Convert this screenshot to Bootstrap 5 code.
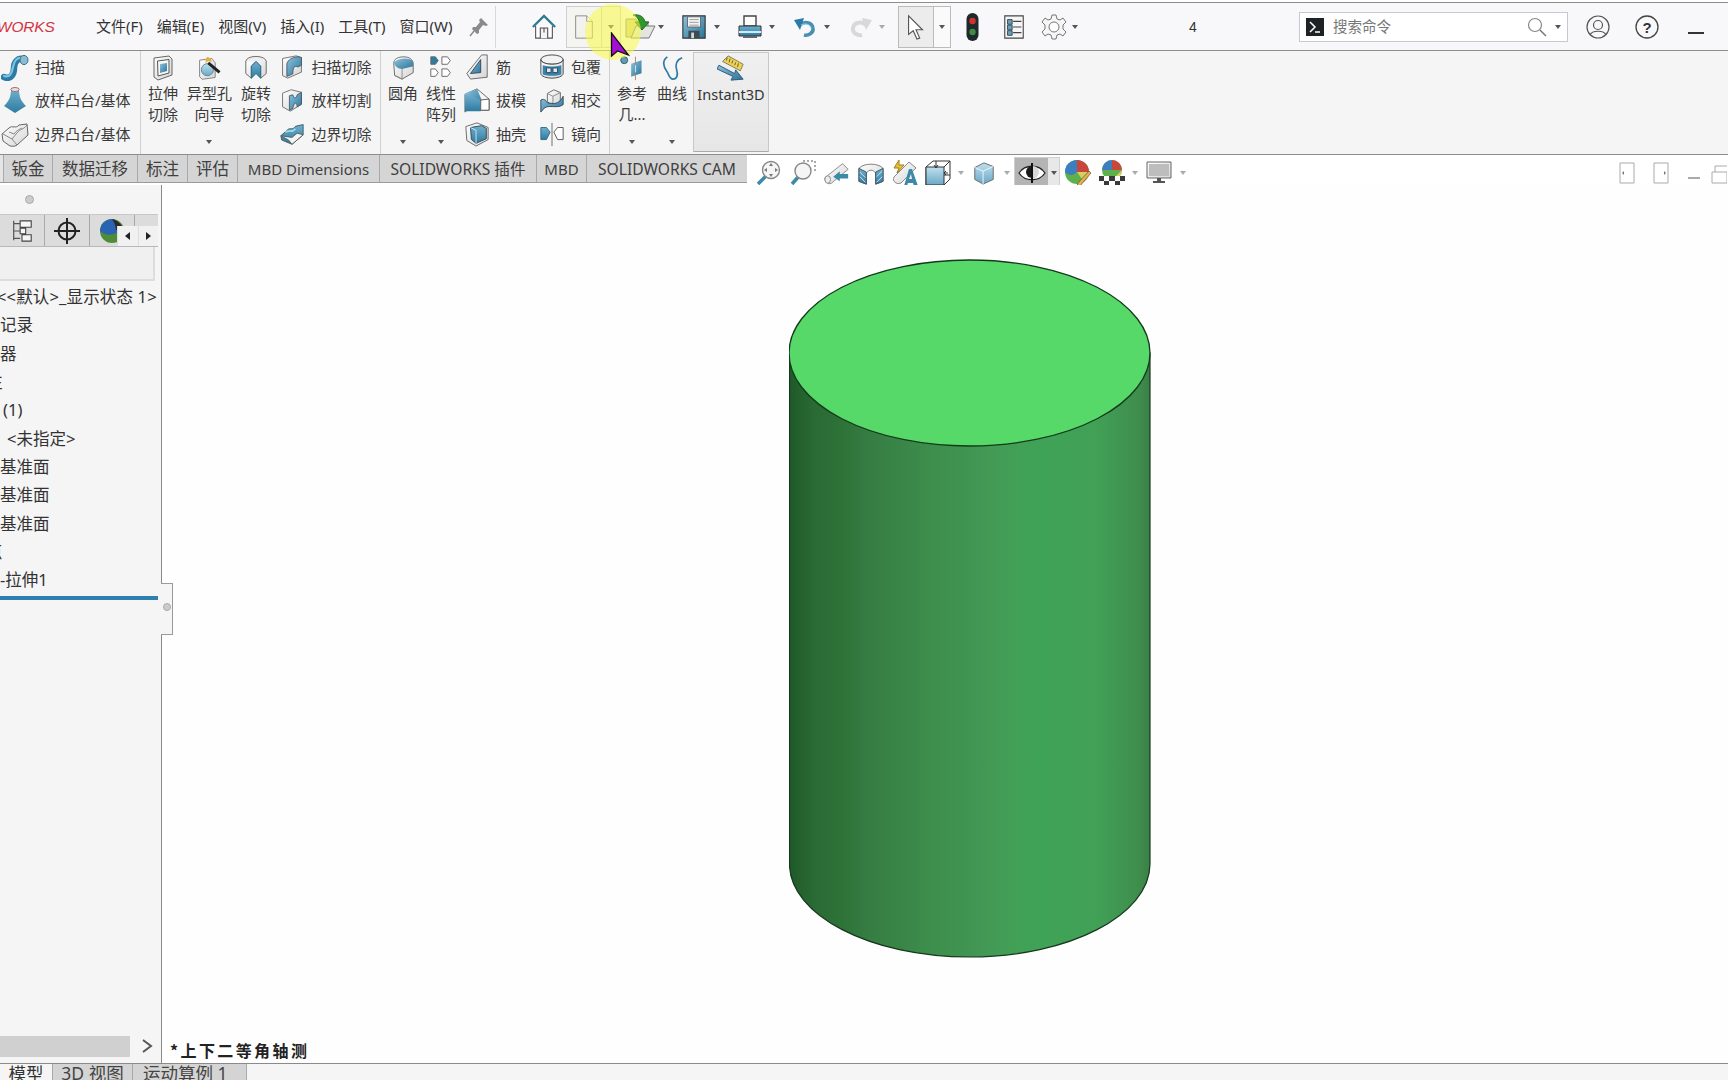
<!DOCTYPE html>
<html lang="zh-CN">
<head>
<meta charset="utf-8">
<title>SOLIDWORKS</title>
<link href="https://cdn.jsdelivr.net/npm/bootstrap@5.3.0/dist/css/bootstrap.min.css" rel="stylesheet">
<style>
html,body{margin:0;height:100%;overflow:hidden;background:#fff}
body{font-family:"Noto Sans","Noto Sans CJK SC",sans-serif;color:#3a3a3a;font-size:15px}
.defs-holder{display:block;width:0;height:0}
.app-root{width:1728px;height:1080px;overflow:hidden;position:relative}
svg.ic{display:block;flex:none}
.s20{width:20px;height:20px}.s22{width:22px;height:22px}.s24{width:24px;height:24px}.s26{width:26px;height:26px}.s28{width:28px;height:28px}.s30{width:30px;height:30px}.s32{width:32px;height:30px}
.caretx{display:block;flex:none;width:0;height:0;border-left:3.5px solid transparent;border-right:3.5px solid transparent;border-top:4px solid #555}
.caretx.faint{border-top-color:#aaa}
/* top bar */
.topbar{padding-top:2px;padding-bottom:1px;border-top:1px solid #8d8d8d;margin-top:2px;border-bottom:1px solid #8d8d8d;background:#f8f8fa;display:grid;grid-template-columns:96px 373px 26px 36px 35px 58px 34px 23px 33px 23px 32px 24px 31px 25px 30px 19px 66px 38px 39px 31px 114px 113px 287px 49px 53px 40px;align-items:center;box-sizing:content-box;height:44px}
.brand{font-family:"Liberation Sans",sans-serif;font-style:italic;font-size:15.5px;color:#d3353f;letter-spacing:-.2px;margin-left:-3px}
.menus{display:flex;gap:14px;font-size:15px;line-height:20px;color:#333;white-space:nowrap;margin-top:-2px}
.vsep{width:1px;height:42px;background:#d8d8d8}
.ddbox{width:55px;height:42px;display:flex;align-items:center;border:1px solid #cfcfcf;background:#f4f4f0}
.ddbox .mainpart{width:35px;height:100%;display:flex;align-items:center;justify-content:center;border-right:1px solid #cfcfcf}
.ddbox .tail{flex:1;display:flex;justify-content:center}
.ddbox.sel{width:53px;border-color:#bbb;background:#fafafa}
.ddbox.sel .mainpart{background:#ececec;border-right-color:#bbb}
.num4{font-family:"Liberation Sans",sans-serif;font-size:14px;padding-left:3px;color:#333}
.cmdsearch{width:269px;height:30px;background:#fff;border:1px solid #c8c8d2;display:flex;align-items:center;padding:0 6px;font-size:14.5px;color:#777}
.cmdsearch .qt{margin-left:9px;flex:1}
.minbar{width:16px;height:2px;background:#333;margin-top:11px}
/* ribbon */
.ribbon{height:104px;background:#f5f5f5;border-bottom:1px solid #8d8d8d;display:flex;box-sizing:border-box}
.rgroup{height:100%;border-right:1px solid #d0d0d0;display:grid}
.g1{width:141px;grid-template-columns:1fr}
.g2{width:240px;padding-left:4px;grid-template-columns:36px 46px 36px 1fr;column-gap:5.5px}
.g3{width:229px;padding-left:5px;grid-template-columns:34px 34px 73px auto;column-gap:4px}
.g4{width:83px;padding-left:6px;grid-template-columns:32px 32px;column-gap:8px}
.tallbtn{display:flex;flex-direction:column;align-items:center;height:103px;padding-top:4px;font-size:15px;line-height:21px;text-align:center;position:relative;white-space:nowrap}
.tallbtn .ic{margin-bottom:2px}
.tallbtn .caretx{position:absolute;bottom:10px;left:50%;margin-left:-3.5px}
.rlist{display:flex;flex-direction:column;font-size:15px;white-space:nowrap;margin-top:-1px}
.rrow{height:33.6px;display:flex;align-items:center}
.g1 .rrow{padding-left:1px;gap:6px}
.g2 .rrow{gap:8px}
.g3 .rrow.a{gap:6px;padding-left:2px}
.g3 .rrow.b{gap:6px}
.inst{width:76px;height:100px;margin-top:1px;background:linear-gradient(#f0f0f0,#e6e6e6);border:1px solid #c8c8c8;border-bottom-color:#aaa;display:flex;flex-direction:column;align-items:center;padding-top:1px;font-size:14.5px;line-height:21px;color:#333}
.inst .ic{margin-bottom:2px}
/* tabs */
.tabrow{height:30px;display:flex;background:#fff}
.tabs-x{display:grid;grid-template-columns:3px 49px 85px 50px 50px 142px 157px 50px 161px;height:28px;border-bottom:1px solid #9a9a9a;background:#d5d5d5;font-size:16.5px;color:#3f3f3f}
.tabs-x>div{display:flex;align-items:center;justify-content:center;border-left:1px solid #a9a9a9;white-space:nowrap;line-height:26px}
.tabs-x>div:first-child{border-left:0;background:#e4e4e4}
.tabs-x .lt{font-size:15px}
.tabs-x .lw{font-size:15.6px}
.viewtools{display:grid;grid-template-columns:5px 34px 34px 33px 35px 33px 34px 12px 34px 12px 48px 34px 34px 12px 36px 12px 1fr 34px 34px 32px 18px;align-items:center;height:32px;flex:1;margin-top:2px}
.viewtools>*{justify-self:center}
.eyebox{width:46px;height:32px;display:flex;border:1px solid #cfcfcf;background:#e8e8e8;align-items:center}
.eyebox .on{width:33px;height:100%;background:#b4b4b4;display:flex;align-items:center;justify-content:center}
.eyebox .tail{flex:1;display:flex;justify-content:center}
/* work */
.workarea{display:flex;height:878px}
.sidepanel{width:162px;flex:none;background:#f5f5f5;border-right:1px solid #8a8a8a;position:relative;display:flex;flex-direction:column}
.dotrow{height:29px;display:flex;align-items:center;padding-left:25px}
.ball{width:9px;height:9px;border-radius:50%;background:#ccc;border:1px solid #aaa}
.paneltabs{height:33px;display:flex;width:158px;background:#dcdcdc;border-top:1px solid #c8c8c8;border-bottom:1px solid #b8b8b8;position:relative;overflow:hidden}
.paneltabs .pt{width:45px;flex:none;display:flex;align-items:center;justify-content:center;border-right:1px solid #aaa}
.ptarrows{position:absolute;right:0;bottom:0;width:41px;height:20px;display:flex;background:#f1f1f1}
.ptarrows span{flex:1;display:flex;align-items:center;justify-content:center;border-left:1px solid #ddd}
.tri-l{width:0;height:0;border-top:4px solid transparent;border-bottom:4px solid transparent;border-right:5px solid #222}
.tri-r{width:0;height:0;border-top:4px solid transparent;border-bottom:4px solid transparent;border-left:5px solid #222}
.filterbox{height:34px;width:155px;background:#f0f0f0;border-right:2px solid #ddd;border-bottom:2px solid #ddd}
.treelist{padding-top:2px;font-size:16.5px;line-height:28.33px;white-space:nowrap;overflow:hidden;width:158px;color:#333}
.treelist>div{height:28.33px}
.neg3{margin-left:-3px;letter-spacing:.15px}.neg13{margin-left:-14px}.pl2x{padding-left:7px}.pl1x{padding-left:3px}
.bluebar{width:158px;height:4px;background:#2f7fb3;margin-top:1px}
.notch{position:absolute;left:161px;top:398px;width:12px;height:52px;background:#f5f5f5;border:1px solid #9a9a9a;border-left:0;z-index:2}
.notch i{position:absolute;left:2px;top:19px;width:8px;height:8px;border-radius:50%;background:#ccc;border:1px solid #aaa}
.hscroll{margin-top:auto;height:26px;display:flex;align-items:center;margin-bottom:4px}
.hscroll .th{width:130px;height:21px;background:#d0d0d0}
.hscroll .chev{margin-left:11px;width:12px;height:14px}
.canvasv{flex:1;position:relative;background:#fefefe}
.cylsvg{position:absolute;left:627px;top:65px;width:380px;height:720px}
.viewlabel{position:absolute;left:8px;bottom:3px;font-size:16px;font-weight:700;letter-spacing:2.4px;line-height:20px;color:#222;font-family:"Noto Sans CJK SC",sans-serif;white-space:nowrap}
.bottombar{height:18px;border-top:1px solid #8a8a8a;background:#f5f5f5;display:flex;overflow:hidden;font-size:17.5px;line-height:19px;color:#444}
.bottombar>div{display:flex;justify-content:center;white-space:nowrap;background:#d4d4d4;border-right:1px solid #a9a9a9}
.bottombar .b1{width:53px;background:#f5f5f5;color:#333}
.bottombar .b2{width:80px}.bottombar .b3{width:114px;justify-content:flex-start;padding-left:10px}
/* cursor */
.halo{position:absolute;left:585px;top:4px;width:56px;height:56px;border-radius:50%;background:radial-gradient(circle,rgba(250,250,70,.55) 78%,rgba(250,250,70,.22) 96%,rgba(250,250,70,0) 100%);pointer-events:none}
.pointer{position:absolute;left:610px;top:32px;width:20px;height:27px}
</style>
</head>
<body>
<svg class="defs-holder" xmlns="http://www.w3.org/2000/svg">
<defs>
<linearGradient id="gb" x1="0" y1="0" x2="1" y2="1"><stop offset="0" stop-color="#8cc3dc"/><stop offset="1" stop-color="#2c7399"/></linearGradient>
<linearGradient id="gv" x1="0" y1="0" x2="0" y2="1"><stop offset="0" stop-color="#6fb0cf"/><stop offset="1" stop-color="#2f7ba0"/></linearGradient>
<linearGradient id="gw" x1="0" y1="0" x2="1" y2="1"><stop offset="0" stop-color="#fff"/><stop offset="1" stop-color="#d5d5d5"/></linearGradient>
<linearGradient id="gs" x1="0" y1="0" x2="0" y2="1"><stop offset="0" stop-color="#bfe0ee"/><stop offset="1" stop-color="#6aa8c7"/></linearGradient>
<symbol id="i-sweep" viewBox="0 0 28 28"><path d="M3 24C10 27 13 21 13 15S17 5 21 6" fill="none" stroke="#2c7ba6" stroke-width="6.5" stroke-linecap="round"/><path d="M3 23C9 25 11 20 12 14S16 4 21 5" fill="none" stroke="#7fc3df" stroke-width="2.2" stroke-linecap="round"/><ellipse cx="23" cy="7" rx="4" ry="4.6" fill="#8dbcd2" stroke="#3f6f88"/></symbol>
<symbol id="i-loft" viewBox="0 0 28 28"><path d="M10 3C10 11 8 15 3 20L14 27 25 20C20 15 18 11 18 3Z" fill="url(#gv)"/><ellipse cx="14" cy="3.5" rx="4.2" ry="2" fill="#d6e6ee" stroke="#b66"/></symbol>
<symbol id="i-bound" viewBox="0 0 28 28"><path d="M1 14 8 8C11 5 15 9 18 5L26 4 27 15 16 25C13 27 11 26 9 26L2 21Z" fill="url(#gw)" stroke="#666"/><path d="M2 14 11 19 16 25M11 19 16 13C19 9 22 10 26 5M8 12 13 14C15 11 17 10 21 8" fill="none" stroke="#888"/></symbol>
<symbol id="i-ext" viewBox="0 0 24 26"><path d="M3 3 18 1 21 4V20L7 25 3 22Z" fill="url(#gw)" stroke="#666"/><path d="M6.500 6 18 4.500V18L7 21Z" fill="#f7f7f7" stroke="#555"/><path d="M9 9 16 8V16L9 18Z" fill="url(#gb)"/></symbol>
<symbol id="i-hole" viewBox="0 0 30 28"><path d="M3 5 17 3 21 8V25L6 27 3 24Z" fill="url(#gw)" stroke="#777"/><circle cx="12" cy="16" r="7" fill="url(#gs)" stroke="#5a7f92"/><path d="M13 8 26 19" stroke="#222" stroke-width="3.400"/><path d="M12 1 16 3 17 7 13 6 10 8 10 4Z" fill="#e0b040"/></symbol>
<symbol id="i-rev" viewBox="0 0 26 28"><ellipse cx="13" cy="7" rx="11" ry="5.500" fill="#eee" stroke="#666"/><path d="M2 7V20L8 25V12L13 7 18 12V25L24 20V7" fill="url(#gw)" stroke="#666"/><path d="M8 12 13 7 18 12V25L13 20 8 25Z" fill="url(#gv)" stroke="#2f6b8a"/></symbol>
<symbol id="i-swcut" viewBox="0 0 26 28"><path d="M2 4 18 1 24 3V20L8 27 2 24Z" fill="url(#gw)" stroke="#666"/><path d="M7 25V10C9 5 13 3 20 2L24 3C24 6 24 9 24 12L20 14C16 12 14 14 14 22Z" fill="url(#gb)" stroke="#456"/></symbol>
<symbol id="i-lfcut" viewBox="0 0 26 28"><path d="M2 6 12 2 24 5V19L11 27 2 22Z" fill="url(#gw)" stroke="#666"/><path d="M10 26V9L14 8C15 12 18 13 19 8L24 5V19L19 22C19 16 15 16 14 24Z" fill="url(#gb)" stroke="#456"/></symbol>
<symbol id="i-bdcut" viewBox="0 0 28 28"><path d="M1 16 9 9C12 6 15 10 18 5L27 3V15L14 26 2 21Z" fill="url(#gv)" stroke="#355"/><path d="M1 16 10 21 14 26 27 15 20 13 14 18Z" fill="#f4f4f4" stroke="#555"/><path d="M6 12C10 9 14 13 18 8" fill="none" stroke="#a4d4e8" stroke-width="2"/></symbol>
<symbol id="i-fil" viewBox="0 0 26 28"><path d="M3 9C3 4 8 2 14 2 20 2 24 5 24 10V19L12 26 4 22Z" fill="url(#gw)" stroke="#666"/><path d="M3 8C8 3 20 2 24 7V12L12 15C8 15 4 12 3 8Z" fill="url(#gb)"/><path d="M4 22 12 26 12 15" fill="none" stroke="#888"/></symbol>
<symbol id="i-pat" viewBox="0 0 28 28"><g stroke="#666" stroke-linejoin="round"><path d="M3 2H8L11 6 8 10H3Z" fill="#2f7ba0"/><path d="M15 2H21L24 6 21 10H15Z" fill="#fff"/><path d="M3 15H8L11 19 8 23H3Z" fill="#fff"/><path d="M15 15H21L24 19 21 23H15Z" fill="#fff"/></g></symbol>
<symbol id="i-rib" viewBox="0 0 26 28"><path d="M2 21 6 27 24 25 24 1 18 1Z" fill="url(#gw)" stroke="#666"/><path d="M6 21 17 6V20Z" fill="url(#gb)" stroke="#345"/></symbol>
<symbol id="i-draft" viewBox="0 0 28 28"><path d="M1 8 14 2 27 13V25H14V17L1 27Z" fill="#f5f5f5" stroke="#666"/><path d="M1 7 14 2 19 14 1 26Z" fill="url(#gb)"/><path d="M1 26V8L18 14V26Z" fill="url(#gv)"/><path d="M18 14 27 13V25H18Z" fill="#fff" stroke="#555"/></symbol>
<symbol id="i-shell" viewBox="0 0 28 28"><path d="M2 6 14 2 26 7V20L13 27 3 21Z" fill="url(#gw)" stroke="#666"/><path d="M7 7 19 5 24 8V19L13 24 8 20Z" fill="url(#gv)" stroke="#345"/><path d="M7 7 13 10V24" fill="none" stroke="#cfe4ee"/></symbol>
<symbol id="i-wrap" viewBox="0 0 28 28"><ellipse cx="14" cy="6" rx="12" ry="5" fill="#f2f2f2" stroke="#444"/><path d="M2 6V21C2 24 8 26 14 26S26 24 26 21V6C26 9 20 11 14 11S2 9 2 6Z" fill="url(#gw)" stroke="#444"/><path d="M4 12C10 14 18 14 24 12V22C18 24 10 24 4 22Z" fill="#3682a8"/><path d="M8 15H13V20H8ZM15 15H20V20H15Z" fill="#d8e8f0" stroke="#345"/></symbol>
<symbol id="i-inter" viewBox="0 0 28 28"><path d="M9 7 16 3 23 6V17L15 20 9 16Z" fill="url(#gw)" stroke="#666"/><path d="M9 7 15 10 23 6M15 10V20" fill="none" stroke="#888"/><path d="M2 14C6 12 8 15 9 17L16 18C20 17 23 16 26 10V19C22 22 16 21 11 21 7 21 5 23 2 27Z" fill="url(#gb)" stroke="#345"/></symbol>
<symbol id="i-mirr" viewBox="0 0 28 28"><path d="M2 7H8L12 12 8 20H2Z" fill="url(#gv)" stroke="#2f6b8a"/><path d="M26 7H20L16 12 20 20H26Z" fill="#fff" stroke="#555"/><path d="M14 2V27" stroke="#666"/></symbol>
<symbol id="i-ref" viewBox="0 0 30 28"><path d="M14 9 26 5V20L14 24Z" fill="url(#gb)"/><path d="M19 1V9M19 21V28" stroke="#b07a50"/><path d="M19 11V19" stroke="#ddeef6"/><circle cx="6" cy="5" r="4" fill="#5d9dbb" stroke="#355"/></symbol>
<symbol id="i-curve" viewBox="0 0 28 28"><path d="M9 2C3 6 5 13 8 17 11 21 11 26 15 26 19 26 21 22 19 16 17 11 19 5 25 3" fill="none" stroke="#2d7ca3" stroke-width="1.800"/></symbol>
<symbol id="i-i3d" viewBox="0 0 30 28"><path d="M6 7 12 1 28 10 25 17Z" fill="#efd34a" stroke="#776"/><path d="M11 3 10 6M14 4 13 8M17 6 16 9M20 8 19 11M23 9 22 13" stroke="#555"/><path d="M2 11 19 20 20 16 28 26 15 27 17 23 0 15Z" fill="url(#gb)" stroke="#357"/></symbol>
<symbol id="i-home" viewBox="0 0 26 28"><path d="M1 14 13 2 25 14" fill="none" stroke="#2f7a90" stroke-width="2.500"/><path d="M4 13V26H22V13" fill="#fff" stroke="#555" stroke-width="1.200"/><path d="M9 26V15H17V26M13 15V20" fill="#f4f4f4" stroke="#444" stroke-width="1.100"/></symbol>
<symbol id="i-doc" viewBox="0 0 24 28"><path d="M3 2H15L21 8V26H3Z" fill="#f2f2ef" stroke="#888"/><path d="M15 2V8H21" fill="#fff" stroke="#888"/></symbol>
<symbol id="i-open" viewBox="0 0 32 28"><path d="M2 6H12L14 9H24V24H2Z" fill="#d9d68a" stroke="#888"/><path d="M7 25 12 13H31L25 25Z" fill="#e4e4e0" stroke="#777"/><path d="M9 2C16 1 20 4 21 9H25L18 17 11 9H15C15 6 13 4 9 2Z" fill="#2f9a2c" stroke="#1f6a1c"/></symbol>
<symbol id="i-save" viewBox="0 0 26 28"><path d="M1 2H25V26H1Z" fill="url(#gb)" stroke="#333" stroke-width="1.200"/><path d="M6 3H20V14H6Z" fill="#f3f3f3" stroke="#666"/><path d="M8 6H18M8 9H18M8 12H18" stroke="#999"/><path d="M7 18H19V26H7Z" fill="#3c4a52"/><path d="M10 20H13V26H10Z" fill="#d0d8dc"/></symbol>
<symbol id="i-print" viewBox="0 0 26 26"><path d="M7 2H19V12H7Z" fill="#fff" stroke="#444" stroke-width="1.400"/><path d="M2 12H24V22H2Z" fill="url(#gv)" stroke="#333"/><path d="M2 18H24" stroke="#cfeaf6" stroke-width="2"/><path d="M6 22H20V24H6Z" fill="#666"/></symbol>
<symbol id="i-undo" viewBox="0 0 24 24"><path d="M7 10C11 6 19 7 20 13 21 18 15 21 11 20" fill="none" stroke="#4a8fb3" stroke-width="3.500"/><path d="M1 5 11 3 7 15Z" fill="#2c7ba6"/><path d="M8 10C12 8 17 9 18 13" fill="none" stroke="#9ccfe4"/></symbol>
<symbol id="i-redo" viewBox="0 0 24 24"><g fill="#d8d8d8"><path d="M17 10C13 6 5 7 4 13 3 18 9 21 13 20" fill="none" stroke="#d8d8d8" stroke-width="4"/><path d="M23 5 13 3 17 15Z"/></g></symbol>
<symbol id="i-cur" viewBox="0 0 22 28"><path d="M3 2V22L8 18 12 27 15 26 11 17 18 17Z" fill="#fff" stroke="#555" stroke-width="1.200"/></symbol>
<symbol id="i-light" viewBox="0 0 16 30"><rect x="2" y="1" width="12" height="28" rx="6" fill="#1e2a2a"/><circle cx="8" cy="9" r="3.200" fill="#d0322f"/><circle cx="8" cy="20" r="3.200" fill="#3d8c45"/></symbol>
<symbol id="i-list" viewBox="0 0 24 26"><path d="M2 1H22V25H2Z" fill="#f6f6f6" stroke="#444" stroke-width="1.200"/><path d="M5 5H10V10H5ZM5 11H10V16H5ZM5 17H10V22H5Z" fill="#6aa2bd" stroke="#345"/><path d="M11 7H20M11 13H20M11 19H20" stroke="#444" stroke-width="1.300"/></symbol>
<symbol id="i-gear" viewBox="0 0 26 26"><path d="M11 1H15L16 5 19 6 22 4 25 8 22 11V15L25 18 22 22 19 20 16 21 15 25H11L10 21 7 20 4 22 1 18 4 15V11L1 8 4 4 7 6 10 5Z" fill="#f6f6f6" stroke="#777"/><circle cx="13" cy="13" r="5" fill="#fff" stroke="#777"/></symbol>
<symbol id="i-term" viewBox="0 0 18 18"><rect width="18" height="18" fill="#1f2225"/><path d="M4 4 9 9 4 14M9 14H14" fill="none" stroke="#fff" stroke-width="1.500"/></symbol>
<symbol id="i-mag" viewBox="0 0 20 20"><circle cx="8" cy="8" r="6.500" fill="none" stroke="#888" stroke-width="1.200"/><path d="M13 13 19 19" stroke="#777" stroke-width="1.500"/></symbol>
<symbol id="i-user" viewBox="0 0 24 24"><circle cx="12" cy="12" r="11" fill="none" stroke="#555" stroke-width="1.200"/><circle cx="12" cy="10" r="4.500" fill="none" stroke="#555" stroke-width="1.200"/><path d="M4 20C6 15 18 15 20 20" fill="none" stroke="#555" stroke-width="1.200"/></symbol>
<symbol id="v-zfit" viewBox="0 0 26 26"><path d="M10 16 2 24" stroke="#3d8aa8" stroke-width="3.500"/><circle cx="15" cy="10" r="8.500" fill="#f5f5f5" stroke="#888" stroke-width="1.400"/><path d="M15 3 13 6H17ZM15 17 13 14H17ZM8 10 11 8V12ZM22 10 19 8V12Z" fill="#777"/></symbol>
<symbol id="v-zarea" viewBox="0 0 26 26"><path d="M9 16 2 24" stroke="#3d8aa8" stroke-width="3.500"/><circle cx="13" cy="11" r="8" fill="#f5f5f5" stroke="#888" stroke-width="1.400"/><path d="M13 1H25V13" fill="none" stroke="#555" stroke-dasharray="2 2"/></symbol>
<symbol id="v-prev" viewBox="0 0 28 26"><path d="M1 18 20 3 26 9 8 24C4 26 0 22 1 18Z" fill="url(#gw)" stroke="#888"/><path d="M26 14H17V11L10 17 17 22V19H26Z" fill="#3d8aa8"/><ellipse cx="4" cy="20" rx="3" ry="4" fill="#eee" stroke="#888"/></symbol>
<symbol id="v-sect" viewBox="0 0 28 26"><path d="M1 8C6 2 22 2 27 8V22L19 25V13C16 9 12 9 9 13V25L1 22Z" fill="url(#gw)" stroke="#777"/><path d="M1 8 9 12V25L1 22ZM19 12 27 8V22L19 25Z" fill="url(#gv)" stroke="#456"/><path d="M2 12 8 18M2 17 8 23M20 17 26 11M20 23 26 17" stroke="#d8eaf2"/></symbol>
<symbol id="v-dyn" viewBox="0 0 28 28"><path d="M3 18 18 3 25 9 10 24C5 26 1 22 3 18Z" fill="url(#gw)" stroke="#888"/><path d="M8 1 3 9H8L6 14 13 6H8Z" fill="#e8c030" stroke="#a08020"/><path d="M18 10 13 27H16L17 24H22L23 27H27L21 10Z" fill="#3d8aa8"/><path d="M18 20H21L20 15Z" fill="#eee"/></symbol>
<symbol id="v-orient" viewBox="0 0 28 28"><path d="M2 8 9 2H26V20L20 26H2Z" fill="#fff" stroke="#333"/><path d="M2 8H20V26H2Z" fill="url(#gs)" stroke="#333"/><path d="M20 8 26 2M20 16H26" stroke="#333"/><path d="M12 2V8M10 6 12 9 14 6M24 14H20M22 12 20 14 22 16" stroke="#333" fill="none"/></symbol>
<symbol id="v-disp" viewBox="0 0 24 26"><path d="M2 7 12 2 22 6V20L11 25 2 20Z" fill="url(#gs)" stroke="#666"/><path d="M2 7 11 11 22 6M11 11V25" fill="none" stroke="#f0f8fc"/></symbol>
<symbol id="v-eye" viewBox="0 0 28 22"><path d="M1 11C7 2 21 2 27 11 21 20 7 20 1 11Z" fill="#fff" stroke="#222" stroke-width="1.300"/><circle cx="14" cy="10" r="6" fill="#1a1a1a"/><path d="M14 1V21" stroke="#111" stroke-width="2"/><path d="M15 4A6 6 0 0 1 15 16Z" fill="#d8d8d8"/></symbol>
<symbol id="v-ball" viewBox="0 0 28 28"><circle cx="13" cy="13" r="12" fill="#5db04a"/><path d="M13 1A12 12 0 0 0 1 13C5 17 9 17 13 13Z" fill="#3c7fc0"/><path d="M13 1A12 12 0 0 1 25 13L13 13Z" fill="#c8463c"/><path d="M25 13A12 12 0 0 1 20 23L13 13Z" fill="#d6cf60"/><path d="M27 14 16 27 13 27 14 24 25 12Z" fill="#e8b048" stroke="#555" stroke-width=".7"/></symbol>
<symbol id="v-scene" viewBox="0 0 28 28"><circle cx="14" cy="11" r="10" fill="#5db04a"/><path d="M14 1A10 10 0 0 0 4 11L14 11Z" fill="#3c7fc0"/><path d="M14 1A10 10 0 0 1 24 11L14 11Z" fill="#c8463c"/><path d="M24 11A10 10 0 0 1 14 21Z" fill="#d6cf60"/><path d="M1 17H27V27H1Z" fill="#fff"/><path d="M1 17H6V22H1ZM11 17H17V22H11ZM22 17H27V22H22ZM6 22H11V27H6ZM17 22H22V27H17Z" fill="#3a3a3a"/></symbol>
<symbol id="v-mon" viewBox="0 0 26 24"><path d="M1 1H25V17H1Z" fill="url(#gw)" stroke="#666"/><path d="M3 3H23V15H3Z" fill="#bdbdbd"/><path d="M11 17H15V20H19V22H7V20H11Z" fill="#555"/></symbol>
<symbol id="v-pl" viewBox="0 0 16 22"><path d="M1 1H15V21H1Z" fill="#fff" stroke="#aaa"/><path d="M5 9 3 11 5 13Z" fill="#777"/></symbol>
<symbol id="v-pr" viewBox="0 0 16 22"><path d="M1 1H15V21H1Z" fill="#fff" stroke="#aaa"/><path d="M11 9 13 11 11 13Z" fill="#777"/></symbol>
<symbol id="v-res" viewBox="0 0 16 22"><path d="M1 10H16V21H1ZM4 10V4H16" fill="#fff" stroke="#aaa"/></symbol>
<symbol id="p-tree" viewBox="0 0 24 26"><path d="M3 2V23M3 5H10M3 13H10M3 21H10" stroke="#555" stroke-width="1.300" fill="none"/><path d="M10 2H22V9H10ZM10 10H16V16H10ZM12 17H22V24H12Z" fill="#f5f5f5" stroke="#444" stroke-width="1.200"/></symbol>
<symbol id="p-cross" viewBox="0 0 26 26"><circle cx="13" cy="13" r="8.500" fill="none" stroke="#222" stroke-width="2"/><path d="M13 0V26M0 13H26" stroke="#222" stroke-width="2"/></symbol>
<symbol id="p-globe" viewBox="0 0 26 26"><circle cx="13" cy="13" r="12" fill="#4f8c3a"/><path d="M13 1A12 12 0 0 0 1 13C6 18 16 18 22 12 22 6 18 2 13 1Z" fill="#2a63b0"/><path d="M13 1C18 2 23 6 25 12L17 12C17 8 15 4 13 1Z" fill="#2a2a2a"/></symbol>
</defs>
</svg>
<div class="app-root">
  <header class="topbar">
    <div class="brand">WORKS</div>
    <nav class="menus"><span>文件(F)</span><span>编辑(E)</span><span>视图(V)</span><span>插入(I)</span><span>工具(T)</span><span>窗口(W)</span></nav>
    <svg class="ic s20" viewBox="0 0 20 20"><path d="M12 1 19 8 17 9 14 8 10 13 10 16 8 17 3 12 4 10 7 10 11 5 10 3Z" fill="#8a8a8a"/><path d="M5 14 1 19" stroke="#8a8a8a" stroke-width="1.500"/></svg>
    <div class="vsep"></div>
    <svg class="ic s26"><use href="#i-home"/></svg>
    <div class="ddbox"><span class="mainpart"><svg class="ic s26"><use href="#i-doc"/></svg></span><span class="tail"><i class="caretx"></i></span></div>
    <svg class="ic s32"><use href="#i-open"/></svg><i class="caretx"></i>
    <svg class="ic s26"><use href="#i-save"/></svg><i class="caretx"></i>
    <svg class="ic s26"><use href="#i-print"/></svg><i class="caretx"></i>
    <svg class="ic s24"><use href="#i-undo"/></svg><i class="caretx"></i>
    <svg class="ic s24"><use href="#i-redo"/></svg><i class="caretx faint"></i>
    <div class="ddbox sel"><span class="mainpart"><svg class="ic s26"><use href="#i-cur"/></svg></span><span class="tail"><i class="caretx"></i></span></div>
    <svg class="ic" width="17" height="30"><use href="#i-light"/></svg>
    <svg class="ic s24"><use href="#i-list"/></svg>
    <svg class="ic s26"><use href="#i-gear"/></svg><i class="caretx"></i>
    <div class="num4">4</div>
    <div class="cmdsearch"><svg class="ic" width="18" height="18"><use href="#i-term"/></svg><span class="qt">搜索命令</span><svg class="ic s20"><use href="#i-mag"/></svg><i class="caretx ms-2"></i></div>
    <svg class="ic s24"><use href="#i-user"/></svg>
    <div class="d-flex"><svg class="ic s24" viewBox="0 0 24 24"><circle cx="12" cy="12" r="11" fill="none" stroke="#444" stroke-width="1.300"/><text x="12" y="17.500" text-anchor="middle" font-family="Liberation Sans" font-size="15" font-weight="700" fill="#333">?</text></svg></div>
    <div class="minbar"></div>
  </header>

  <section class="ribbon">
    <div class="rgroup g1"><div class="rlist">
      <div class="rrow"><svg class="ic s28"><use href="#i-sweep"/></svg><span>扫描</span></div>
      <div class="rrow"><svg class="ic s28"><use href="#i-loft"/></svg><span>放样凸台/基体</span></div>
      <div class="rrow"><svg class="ic s28"><use href="#i-bound"/></svg><span>边界凸台/基体</span></div>
    </div></div>
    <div class="rgroup g2">
      <div class="tallbtn"><svg class="ic s26"><use href="#i-ext"/></svg>拉伸<br>切除</div>
      <div class="tallbtn"><svg class="ic s26"><use href="#i-hole"/></svg>异型孔<br>向导<i class="caretx"></i></div>
      <div class="tallbtn"><svg class="ic s26"><use href="#i-rev"/></svg>旋转<br>切除</div>
      <div class="rlist">
        <div class="rrow"><svg class="ic s24"><use href="#i-swcut"/></svg><span>扫描切除</span></div>
        <div class="rrow"><svg class="ic s24"><use href="#i-lfcut"/></svg><span>放样切割</span></div>
        <div class="rrow"><svg class="ic s24"><use href="#i-bdcut"/></svg><span>边界切除</span></div>
      </div>
    </div>
    <div class="rgroup g3">
      <div class="tallbtn"><svg class="ic s26"><use href="#i-fil"/></svg>圆角<i class="caretx"></i></div>
      <div class="tallbtn"><svg class="ic s26"><use href="#i-pat"/></svg>线性<br>阵列<i class="caretx"></i></div>
      <div class="rlist">
        <div class="rrow a"><svg class="ic s26"><use href="#i-rib"/></svg><span>筋</span></div>
        <div class="rrow a"><svg class="ic s26"><use href="#i-draft"/></svg><span>拔模</span></div>
        <div class="rrow a"><svg class="ic s26"><use href="#i-shell"/></svg><span>抽壳</span></div>
      </div>
      <div class="rlist">
        <div class="rrow b"><svg class="ic s26"><use href="#i-wrap"/></svg><span>包覆</span></div>
        <div class="rrow b"><svg class="ic s26"><use href="#i-inter"/></svg><span>相交</span></div>
        <div class="rrow b"><svg class="ic s26"><use href="#i-mirr"/></svg><span>镜向</span></div>
      </div>
    </div>
    <div class="rgroup g4 border-0">
      <div class="tallbtn"><svg class="ic s26"><use href="#i-ref"/></svg>参考<br>几...<i class="caretx"></i></div>
      <div class="tallbtn"><svg class="ic s26"><use href="#i-curve"/></svg>曲线<i class="caretx"></i></div>
    </div>
    <div class="inst"><svg class="ic s28"><use href="#i-i3d"/></svg>Instant3D</div>
  </section>

  <section class="tabrow">
    <div class="tabs-x">
      <div></div><div>钣金</div><div>数据迁移</div><div>标注</div><div>评估</div><div class="lt">MBD Dimensions</div><div class="lw">SOLIDWORKS 插件</div><div class="lt">MBD</div><div class="lw">SOLIDWORKS CAM</div>
    </div>
    <div class="viewtools">
      <span></span>
      <svg class="ic s26"><use href="#v-zfit"/></svg>
      <svg class="ic s26"><use href="#v-zarea"/></svg>
      <svg class="ic s26"><use href="#v-prev"/></svg>
      <svg class="ic s26"><use href="#v-sect"/></svg>
      <svg class="ic s28"><use href="#v-dyn"/></svg>
      <svg class="ic s28"><use href="#v-orient"/></svg>
      <i class="caretx faint"></i>
      <svg class="ic s24"><use href="#v-disp"/></svg>
      <i class="caretx faint"></i>
      <div class="eyebox"><span class="on"><svg class="ic" width="28" height="22"><use href="#v-eye"/></svg></span><span class="tail"><i class="caretx"></i></span></div>
      <svg class="ic s28"><use href="#v-ball"/></svg>
      <svg class="ic s28"><use href="#v-scene"/></svg>
      <i class="caretx faint"></i>
      <svg class="ic s26"><use href="#v-mon"/></svg>
      <i class="caretx faint"></i>
      <span></span>
      <svg class="ic" width="16" height="22"><use href="#v-pl"/></svg>
      <svg class="ic" width="16" height="22"><use href="#v-pr"/></svg>
      <svg class="ic" width="16" height="22" viewBox="0 0 16 22"><path d="M2 16H14" stroke="#aaa" stroke-width="2"/></svg>
      <svg class="ic" width="16" height="22"><use href="#v-res"/></svg>
    </div>
  </section>

  <main class="workarea">
    <aside class="sidepanel">
      <div class="dotrow"><span class="ball"></span></div>
      <div class="paneltabs">
        <span class="pt"><svg class="ic s24"><use href="#p-tree"/></svg></span>
        <span class="pt"><svg class="ic s26"><use href="#p-cross"/></svg></span>
        <span class="pt"><svg class="ic s26"><use href="#p-globe"/></svg></span>
        <span class="ptarrows"><span><i class="tri-l"></i></span><span><i class="tri-r"></i></span></span>
      </div>
      <div class="filterbox"></div>
      <div class="treelist">
        <div class="neg3">&lt;&lt;默认&gt;_显示状态 1&gt;</div>
        <div>记录</div>
        <div>器</div>
        <div class="neg13">注</div>
        <div class="pl1x">(1)</div>
        <div class="pl2x">&lt;未指定&gt;</div>
        <div>基准面</div>
        <div>基准面</div>
        <div>基准面</div>
        <div class="neg13">点</div>
        <div>-拉伸1</div>
      </div>
      <div class="bluebar"></div>
      <div class="notch"><i></i></div>
      <div class="hscroll"><span class="th"></span><svg class="ic chev" viewBox="0 0 12 14"><path d="M2 1 10 7 2 13" fill="none" stroke="#555" stroke-width="2"/></svg></div>
    </aside>
    <div class="canvasv">
      <svg class="cylsvg" viewBox="789 249 380 720" xmlns="http://www.w3.org/2000/svg">
        <defs>
          <linearGradient id="cylg" gradientUnits="userSpaceOnUse" x1="789" y1="0" x2="1150" y2="0">
            <stop offset="0" stop-color="#1f5a28"/><stop offset=".07" stop-color="#2a6a34"/><stop offset=".16" stop-color="#2f7439"/><stop offset=".21" stop-color="#357c42"/><stop offset=".33" stop-color="#3a8749"/><stop offset=".4" stop-color="#3e8f4e"/><stop offset=".47" stop-color="#3f9250"/><stop offset=".58" stop-color="#439c56"/><stop offset=".63" stop-color="#41a055"/><stop offset=".7" stop-color="#3fa357"/><stop offset=".85" stop-color="#41a056"/><stop offset=".97" stop-color="#3f8d4d"/><stop offset="1" stop-color="#3a7f46"/>
          </linearGradient>
        </defs>
        <path d="M789.500 352V863C789.500 914 870 956 969.500 956S1150 914 1150 863V352Z" fill="url(#cylg)" stroke="#16381d" stroke-width="1.200"/>
        <ellipse cx="969.500" cy="352" rx="180.500" ry="93" fill="#57d96a" stroke="#143a1c" stroke-width="1.300"/>
      </svg>
      <div class="viewlabel">*上下二等角轴测</div>
    </div>
  </main>
  <footer class="bottombar"><div class="b1">模型</div><div class="b2">3D 视图</div><div class="b3">运动算例 1</div></footer>
  <div class="halo"></div>
  <svg class="pointer" viewBox="0 0 20 27"><path d="M1.500 1 1.500 24 7.500 19 18.500 23Z" fill="#a30fd6" stroke="#111" stroke-width="1.300"/></svg>
</div>
<script src="https://cdn.jsdelivr.net/npm/bootstrap@5.3.0/dist/js/bootstrap.bundle.min.js"></script>
</body>
</html>
